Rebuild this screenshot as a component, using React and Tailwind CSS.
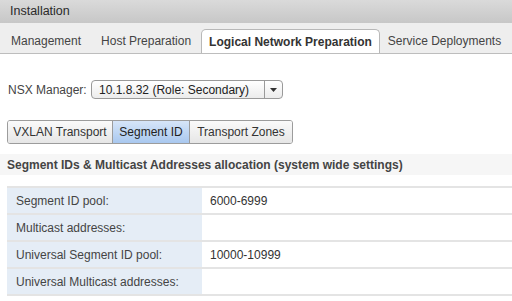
const rows = [
  { label: 'Segment ID pool:', value: '6000-6999' },
  { label: 'Multicast addresses:', value: '' },
  { label: 'Universal Segment ID pool:', value: '10000-10999' },
  { label: 'Universal Multicast addresses:', value: '' },
];

function TopTabs() {
  const tabs = ['Management', 'Host Preparation', 'Logical Network Preparation', 'Service Deployments'];
  return (
    <div className="h-[31px] bg-[#eeeeee] border-b border-[#bdbdbd] flex items-end pl-[1px] whitespace-nowrap overflow-hidden">
      {tabs.map((tab, i) =>
        i === 2 ? (
          <div
            key={tab}
            className="shrink-0 h-[25px] -mb-px px-[7px] bg-white border border-b-0 border-[#b8b8b8] rounded-t-[5px] flex items-center font-bold text-[#333]"
          >
            {tab}
          </div>
        ) : (
          <div key={tab} className={`shrink-0 h-[25px] ${i === 3 ? 'pl-[8px]' : 'px-[10px]'} flex items-center text-[#444]`}>
            {tab}
          </div>
        )
      )}
    </div>
  );
}

function SegmentButtons() {
  const items = [
    { label: 'VXLAN Transport', w: 'w-[104px]' },
    { label: 'Segment ID', w: 'w-[77px]' },
    { label: 'Transport Zones', w: 'w-[103px]' },
  ];
  return (
    <div className="inline-flex h-[24px] border border-[#9c9c9c] rounded-[3px] overflow-hidden whitespace-nowrap">
      {items.map((item, i) => (
        <div
          key={item.label}
          className={`${item.w} flex items-center justify-center ${i > 0 ? 'border-l border-[#9c9c9c]' : ''} ${
            i === 1
              ? 'bg-gradient-to-b from-[#d6e5f8] to-[#a9c8ef] text-[#222]'
              : 'bg-gradient-to-b from-[#fafafa] to-[#e6e6e6] text-[#333]'
          }`}
        >
          {item.label}
        </div>
      ))}
    </div>
  );
}

export default function App() {
  return (
    <div className="w-[512px] h-[301px] bg-white overflow-hidden text-[12px] text-[#333] font-['Liberation_Sans',Arial,sans-serif]">
      {/* Title bar */}
      <div className="h-[23px] bg-gradient-to-b from-[#dadada] to-[#c7c7c7] flex items-center pl-[10px] text-[12.5px] text-[#2a2a2a]">
        Installation
      </div>

      <TopTabs />

      {/* NSX Manager */}
      <div className="flex items-center pl-[8px] mt-[26px] h-[19px]">
        <span className="text-[#444] w-[83px]">NSX Manager:</span>
        <div className="w-[192px] h-[19px] border border-[#9a9a9a] rounded-[4px] bg-gradient-to-b from-white to-[#ececec] flex items-center">
          <span className="flex-1 pl-[7px] text-[#222]">10.1.8.32 (Role: Secondary)</span>
          <div className="w-[18px] h-full border-l border-[#9a9a9a] flex items-center justify-center">
            <svg width="7" height="4" viewBox="0 0 7 4">
              <path d="M0 0h7L3.5 4z" fill="#333" />
            </svg>
          </div>
        </div>
      </div>

      <div className="pl-[7px] mt-[21px]">
        <SegmentButtons />
      </div>

      {/* Section heading */}
      <div className="mt-[10px] h-[21px] bg-[#f6f6f6] flex items-center pl-[7px] font-bold text-[#444]">
        Segment IDs &amp; Multicast Addresses allocation (system wide settings)
      </div>

      {/* Settings table */}
      <div className="ml-[7px] mt-[11px] border-t-2 border-[#e4e4e4]">
        {rows.map((row) => (
          <div key={row.label} className="flex h-[27px] border-b-2 border-[#e4e4e4]">
            <div className="w-[195px] bg-[#e5edf6] flex items-center pl-[9px] text-[#444]">{row.label}</div>
            <div className="flex-1 flex items-center pl-[8px] text-[#333]">{row.value}</div>
          </div>
        ))}
      </div>
    </div>
  );
}
